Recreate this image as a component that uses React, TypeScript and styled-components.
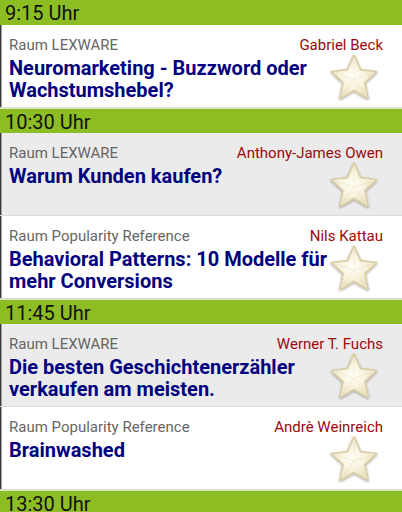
import React from 'react'
import styled, { createGlobalStyle } from 'styled-components'

const GlobalStyle = createGlobalStyle`
  html, body {
    margin: 0;
    padding: 0;
    background: #ffffff;
    overflow: hidden;
  }
  body {
    font-family: Roboto, 'Liberation Sans', sans-serif;
  }
`

type Talk = {
  room: string
  speaker: string
  title: string
}

type Slot = {
  time: string
  talks: Talk[]
}

const slots: Slot[] = [
  {
    time: '9:15 Uhr',
    talks: [{ room: 'Raum LEXWARE', speaker: 'Gabriel Beck', title: 'Neuromarketing - Buzzword oder Wachstumshebel?' }],
  },
  {
    time: '10:30 Uhr',
    talks: [
      { room: 'Raum LEXWARE', speaker: 'Anthony-James Owen', title: 'Warum Kunden kaufen?' },
      { room: 'Raum Popularity Reference', speaker: 'Nils Kattau', title: 'Behavioral Patterns: 10 Modelle für mehr Conversions' },
    ],
  },
  {
    time: '11:45 Uhr',
    talks: [
      { room: 'Raum LEXWARE', speaker: 'Werner T. Fuchs', title: 'Die besten Geschichtenerzähler verkaufen am meisten.' },
      { room: 'Raum Popularity Reference', speaker: 'Andrè Weinreich', title: 'Brainwashed' },
    ],
  },
  {
    time: '13:30 Uhr',
    talks: [],
  },
]

const Page = styled.div`
  display: flex;
  flex-direction: column;
  width: 402px;
  height: 512px;
  overflow: hidden;
`

const TimeHeader = styled.div<{ $first: boolean }>`
  height: 25px;
  box-sizing: border-box;
  padding: 1px 0 0 5px;
  background: #8cbd22;
  border-top: ${(p) => (p.$first ? 'none' : '1px solid #d7e6bc')};
  color: #111111;
  font-size: 20px;
  line-height: 24px;
  font-weight: 400;
  white-space: nowrap;
  flex-shrink: 0;
`

const TalkRow = styled.div<{ $shaded: boolean }>`
  display: flex;
  flex-direction: column;
  height: 83px;
  box-sizing: border-box;
  padding: 11px 19px 0 9px;
  background: ${(p) => (p.$shaded ? '#ebebeb' : '#ffffff')};
  border-bottom: 1px solid #dcdcdc;
  box-shadow: inset 1px 0 #3a3a3a, inset 2px 0 #a0a0a0;
  flex-shrink: 0;
`

const MetaLine = styled.div`
  display: flex;
  justify-content: space-between;
  align-items: baseline;
  font-size: 15px;
  line-height: 18px;
  white-space: nowrap;
`

const Room = styled.span`
  color: #666666;
`

const Speaker = styled.span`
  color: #9a0a0a;
`

const Body = styled.div`
  display: flex;
  align-items: flex-start;
  margin-top: 3px;
`

const Title = styled.div`
  flex: 1;
  min-width: 0;
  color: #02027f;
  font-size: 20px;
  line-height: 22px;
  font-weight: 700;
`

const StarBox = styled.div`
  width: 52px;
  height: 48px;
  margin: -4px 3px 0 -14px;
  flex-shrink: 0;
`

function starPoints(cx: number, cy: number, outer: number, inner: number) {
  const pts: string[] = []
  for (let k = 0; k < 10; k++) {
    const a = ((-90 + k * 36) * Math.PI) / 180
    const r = k % 2 === 0 ? outer : inner
    pts.push(`${(cx + r * Math.cos(a)).toFixed(2)},${(cy + r * Math.sin(a)).toFixed(2)}`)
  }
  return pts.join(' ')
}

function FavStar({ id }: { id: string }) {
  const cx = 26
  const cy = 26
  return (
    <svg width="52" height="48" viewBox="0 0 52 48">
      <defs>
        <radialGradient id={`fill-${id}`} cx="46%" cy="48%" r="58%">
          <stop offset="0%" stopColor="#fffffa" />
          <stop offset="50%" stopColor="#f8f2dc" />
          <stop offset="100%" stopColor="#e4d6ad" />
        </radialGradient>
        <filter id={`sh-${id}`} x="-20%" y="-20%" width="140%" height="140%">
          <feGaussianBlur in="SourceAlpha" stdDeviation="1" />
          <feOffset dx="0" dy="0.6" result="b" />
          <feComponentTransfer>
            <feFuncA type="linear" slope="0.35" />
          </feComponentTransfer>
          <feMerge>
            <feMergeNode />
            <feMergeNode in="SourceGraphic" />
          </feMerge>
        </filter>
      </defs>
      <polygon
        points={starPoints(cx, cy, 23.5, 11.2)}
        fill={`url(#fill-${id})`}
        stroke="#d9cca1"
        strokeWidth="2.2"
        strokeLinejoin="round"
        filter={`url(#sh-${id})`}
      />
      <polygon points={starPoints(cx, cy, 21.5, 10.2)} fill="none" stroke="#ffffff" strokeWidth="0.9" strokeLinejoin="round" opacity="0.6" />
      <g stroke="#ebe0bf" strokeWidth="0.7" opacity="0.7">
        {[0, 1, 2, 3, 4].map((k) => {
          const a = ((-90 + k * 72) * Math.PI) / 180
          return <line key={k} x1={cx} y1={cy} x2={cx + 19 * Math.cos(a)} y2={cy + 19 * Math.sin(a)} />
        })}
      </g>
    </svg>
  )
}

export default function App() {
  let index = 0
  return (
    <>
      <GlobalStyle />
      <Page>
        {slots.map((slot, s) => (
          <React.Fragment key={slot.time}>
            <TimeHeader $first={s === 0}>{slot.time}</TimeHeader>
            {slot.talks.map((talk) => {
              const i = index++
              return (
                <TalkRow key={talk.title} $shaded={i % 2 === 1}>
                  <MetaLine>
                    <Room>{talk.room}</Room>
                    <Speaker>{talk.speaker}</Speaker>
                  </MetaLine>
                  <Body>
                    <Title>{talk.title}</Title>
                    <StarBox>
                      <FavStar id={`s${i}`} />
                    </StarBox>
                  </Body>
                </TalkRow>
              )
            })}
          </React.Fragment>
        ))}
      </Page>
    </>
  )
}
